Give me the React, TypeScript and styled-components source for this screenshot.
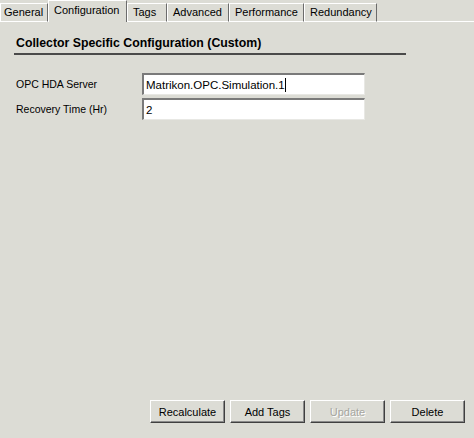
import React from 'react';
import styled, { createGlobalStyle, css } from 'styled-components';

const GlobalStyle = createGlobalStyle`
  html, body {
    margin: 0;
    padding: 0;
    background: #dcdcd5;
  }
  body {
    font-family: 'Liberation Sans', Arial, sans-serif;
    font-size: 10.5px;
    color: #000;
  }
`;

const tabs = [
  { label: 'General', width: 48 },
  { label: 'Configuration', width: 79 },
  { label: 'Tags', width: 40 },
  { label: 'Advanced', width: 62 },
  { label: 'Performance', width: 75 },
  { label: 'Redundancy', width: 73 },
];

const App = () => {
  return (
    <Page>
      <GlobalStyle />
      <TabStrip>
        {tabs.map((t) => (
          <Tab key={t.label} width={t.width} active={t.label === 'Configuration'}>
            {t.label}
          </Tab>
        ))}
        <TabFill />
      </TabStrip>
      <Body>
        <Heading>Collector Specific Configuration (Custom)</Heading>
        <Form>
          <Label>OPC HDA Server</Label>
          <Field>
            Matrikon.OPC.Simulation.1<Caret />
          </Field>
          <Label>Recovery Time (Hr)</Label>
          <Field>2</Field>
        </Form>
        <ButtonRow>
          <Button>Recalculate</Button>
          <Button>Add Tags</Button>
          <Button disabled>Update</Button>
          <Button>Delete</Button>
        </ButtonRow>
      </Body>
    </Page>
  );
};

export default App;

const Page = styled.div`
  width: 474px;
  height: 438px;
  display: flex;
  flex-direction: column;
  background: #dcdcd5;
  overflow: hidden;
`;

const TabStrip = styled.div`
  display: flex;
  align-items: flex-end;
  height: 22px;
  box-sizing: border-box;
`;

const Tab = styled.div<{ active?: boolean; width: number }>`
  box-sizing: border-box;
  width: ${({ width }) => width}px;
  padding: 0 0 0 5px;
  height: 19px;
  line-height: 17px;
  font-size: 11px;
  border-top: 1px solid #fff;
  border-left: 1px solid #fff;
  border-right: 1px solid #6c6c6c;
  border-bottom: 1px solid #fff;
  white-space: nowrap;
  &:first-child {
    padding-left: 3px;
  }
  ${({ active }) =>
    active &&
    css`
      height: 22px;
      line-height: 18px;
      padding-left: 5px;
      border-bottom: none;
      position: relative;
      z-index: 1;
    `}
`;

const TabFill = styled.div`
  flex: 1;
  height: 1px;
  background: #fff;
`;

const Body = styled.div`
  flex: 1;
  display: flex;
  flex-direction: column;
  padding: 0 9px 15px 14px;
`;

const Heading = styled.div`
  margin-top: 15px;
  width: 390px;
  padding: 0 0 3px 2px;
  font-size: 12.3px;
  font-weight: bold;
  line-height: 13px;
  border-bottom: 2px solid #4a4a4a;
`;

const Form = styled.div`
  display: grid;
  grid-template-columns: 126px 223px;
  grid-auto-rows: 22px;
  row-gap: 3px;
  align-items: center;
  margin-top: 18px;
  padding-left: 2px;
`;

const Label = styled.div`
  line-height: 13px;
`;

const Field = styled.div`
  box-sizing: border-box;
  height: 22px;
  padding: 0 2px;
  line-height: 18px;
  font-size: 11.5px;
  background: #fff;
  border-top: 2px solid #7a7a7a;
  border-left: 2px solid #7a7a7a;
  border-right: 1px solid #e8e8e4;
  border-bottom: 1px solid #e8e8e4;
  display: flex;
  align-items: center;
  white-space: nowrap;
`;

const Caret = styled.span`
  display: inline-block;
  width: 1px;
  height: 14px;
  background: #000;
`;

const ButtonRow = styled.div`
  margin-top: auto;
  display: flex;
  justify-content: flex-end;
  gap: 5px;
`;

const Button = styled.button`
  box-sizing: border-box;
  width: 75px;
  height: 23px;
  padding: 0;
  font-family: 'Liberation Sans', Arial, sans-serif;
  font-size: 11px;
  color: #000;
  background: #dcdcd5;
  border-top: 1px solid #fff;
  border-left: 1px solid #fff;
  border-right: 1px solid #404040;
  border-bottom: 1px solid #404040;
  box-shadow: inset -1px -1px 0 #8a8a8a;
  &:disabled {
    color: #a6a6a0;
    text-shadow: 1px 1px 0 #fff;
  }
`;
